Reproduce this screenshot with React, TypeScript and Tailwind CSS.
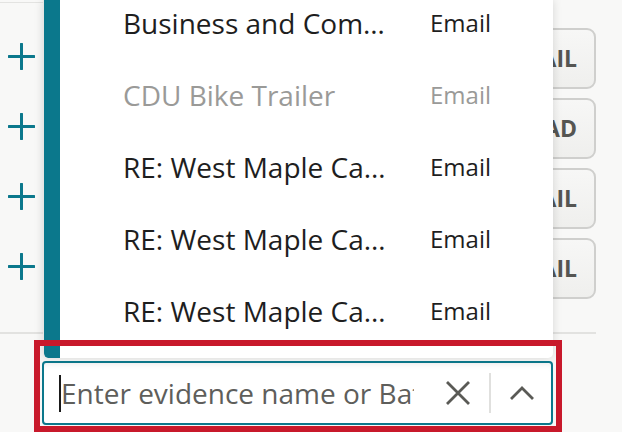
const rows = [
  { name: "Business and Communications Plan", type: "Email", muted: false },
  { name: "CDU Bike Trailer", type: "Email", muted: true },
  { name: "RE: West Maple Canopy Project", type: "Email", muted: false },
  { name: "RE: West Maple Canopy Update", type: "Email", muted: false },
  { name: "RE: West Maple Canopy Photos", type: "Email", muted: false },
];

const actions = ["EMAIL", "UPLOAD", "EMAIL", "EMAIL"];

function Plus() {
  return (
    <svg width="27" height="27" viewBox="0 0 27 27" className="block">
      <path d="M13.5 1v25M1 13.5h25" stroke="#0b788c" strokeWidth="3" strokeLinecap="round" />
    </svg>
  );
}

export default function App() {
  return (
    <div
      className="relative w-[622px] h-[432px] overflow-hidden bg-[#f8f8f7]"
      style={{ fontFamily: '"Open Sans", "Noto Sans", sans-serif' }}
    >
      <div className="mt-[2px] h-[1px] w-[43px] bg-[#e3e3e1]" />

      {/* rows behind the dropdown */}
      <div className="mt-[25px] flex flex-col gap-[9px] w-[596px]">
        {actions.map((a, i) => (
          <div key={i} className="flex items-center justify-between h-[61px]">
            <div className="pl-[8px] mb-[5px]">
              <Plus />
            </div>
            <div className="h-[61px] w-[140px] rounded-[9px] border-2 border-[#cfcfcd] bg-gradient-to-b from-[#f7f7f6] to-[#efefed] flex items-center justify-end pr-[17px] text-[23px] font-bold text-[#555552]">
              {a}
            </div>
          </div>
        ))}
      </div>

      <div className="mt-[33px] h-[2px] w-[596px] bg-[#e2e2e0]" />

      {/* search input */}
      <div className="mt-[27px] ml-[42px] w-[511px] h-[64px] rounded-[4px] border-2 border-[#0b788c] bg-white shadow-[inset_0_6px_6px_-4px_rgba(0,0,0,0.06)] flex items-center">
        <div className="flex items-center ml-[15px] w-[355px] overflow-hidden">
          <div className="w-[2px] h-[37px] bg-[#1a1a1a] shrink-0" />
          <span className="text-[28px] text-[#5e5e5b] whitespace-nowrap">Enter evidence name or Bates number</span>
        </div>
        <div className="ml-[31px] w-[26px] flex justify-center">
          <svg width="26" height="24" viewBox="0 0 26 24" className="block">
            <path d="M2 1l22 22M24 1L2 23" stroke="#5a5a56" strokeWidth="2.8" />
          </svg>
        </div>
        <div className="ml-[18px] w-[2px] h-[40px] bg-[#e0e0de]" />
        <div className="ml-[18px]">
          <svg width="26" height="16" viewBox="0 0 26 16" className="block">
            <path d="M2 14L13 3l11 11" stroke="#5a5a56" strokeWidth="2.8" fill="none" />
          </svg>
        </div>
      </div>

      {/* open dropdown */}
      <div className="absolute left-[43px] top-0 w-[510px] h-[358px] bg-white rounded-b-[5px] border-l border-[#e6e6e4] shadow-[0_0_10px_rgba(0,0,0,0.14)] overflow-hidden flex">
        <div className="w-[16px] h-full bg-[#0b788c] rounded-bl-[4px] shrink-0" />
        <div className="-mt-[13px] pl-[63px] flex flex-col">
          {rows.map((r, i) => (
            <div key={i} className="h-[72px] flex items-center">
              <div
                className={`w-[267px] truncate text-[28px] ${r.muted ? "text-[#9a9a98]" : "text-[#1e1e1e]"}`}
              >
                {r.name}
              </div>
              <div className={`ml-[40px] text-[24px] ${r.muted ? "text-[#9a9a98]" : "text-[#1e1e1e]"}`}>
                {r.type}
              </div>
            </div>
          ))}
        </div>
      </div>

      {/* highlight frame */}
      <div className="absolute left-[34px] top-[340px] w-[528px] h-[92px] border-[6px] border-[#c8192b] pointer-events-none" />
    </div>
  );
}
